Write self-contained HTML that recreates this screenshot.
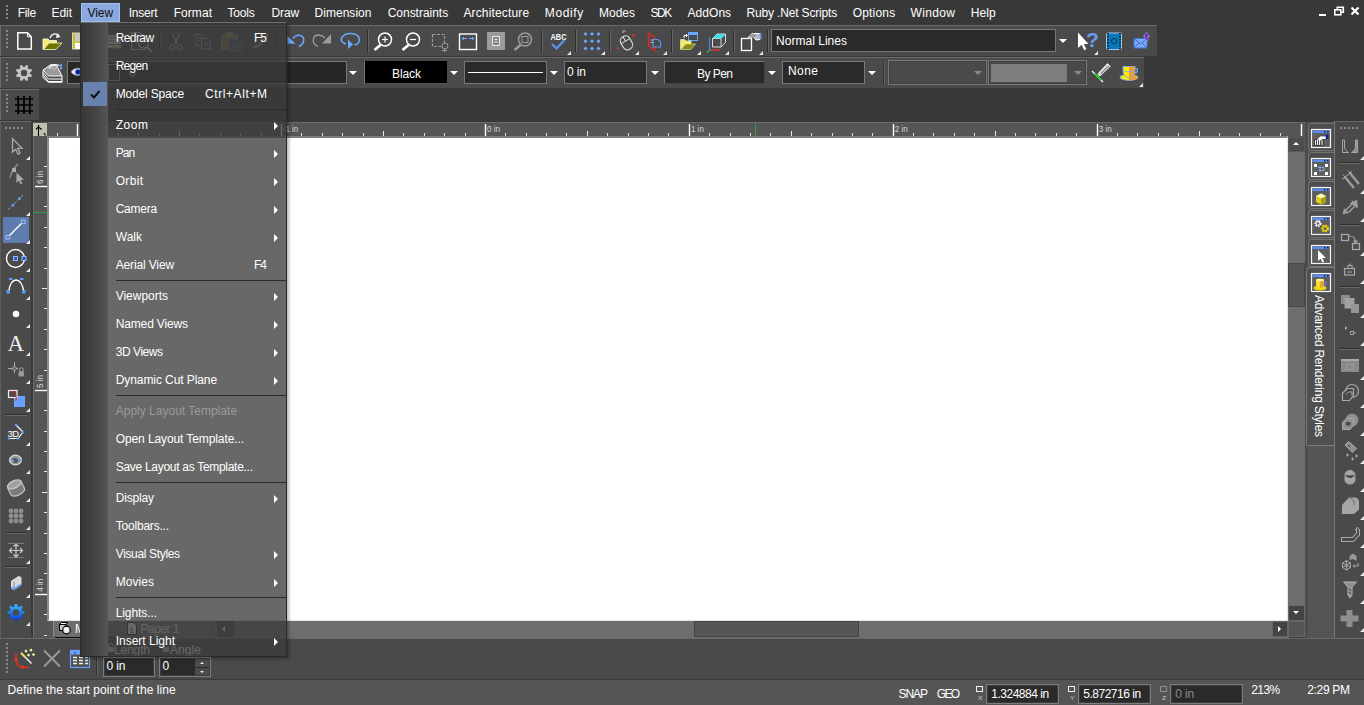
<!DOCTYPE html>
<html><head><meta charset="utf-8"><title>TurboCAD</title><style>
*{box-sizing:border-box;margin:0;padding:0}
html,body{width:1364px;height:705px;overflow:hidden;background:#383838}
body{position:relative;font-family:"Liberation Sans",sans-serif;font-size:12px;color:#fff}
.a{position:absolute}
.t{position:absolute;white-space:nowrap;line-height:16px;height:16px}
.tb{position:absolute;background:#4a4a4a;border-top:1px solid #6a6a6a;border-left:1px solid #6a6a6a}
.grip{position:absolute;width:2px;background-image:linear-gradient(#8a8a8a 50%,transparent 50%);background-size:2px 4px}
.gripH{position:absolute;height:2px;background-image:linear-gradient(90deg,#8a8a8a 50%,transparent 50%);background-size:4px 2px}
.cb{position:absolute;background:#2a2a2a;border:1px solid #787878}
.dd{position:absolute;width:0;height:0;border-left:4px solid transparent;border-right:4px solid transparent;border-top:4px solid #fff}
.sep{position:absolute;width:1px;background:#2e2e2e;border-right:1px solid #666;box-sizing:content-box}
.mi{position:absolute;left:115.700px;white-space:nowrap;line-height:16px;height:16px;color:#fff}
.sc{position:absolute;white-space:nowrap;line-height:16px;height:16px;color:#fff}
.ar{position:absolute;left:274px;width:0;height:0;border-top:4px solid transparent;border-bottom:4px solid transparent;border-left:4.500px solid #fff}
.msep{position:absolute;left:116px;width:170px;height:1px;background:#2b2b2b}
.corner{position:absolute;width:0;height:0;border-left:4px solid transparent;border-bottom:4px solid #e8e8e8}
svg{position:absolute;overflow:visible}
</style></head><body>
<div class="a" style="left:0;top:0;width:1364px;height:25px;background:#383838"></div>
<div class="grip" style="left:6px;top:5px;height:15px"></div>
<div class="a" style="left:81px;top:3px;width:39px;height:19px;background:#8aa9de;border:1px solid #a4bfee"></div>
<span class="t" style="left: 17.8px; top: 5px; color: rgb(255, 255, 255); letter-spacing: -0.35px;">File</span>
<span class="t" style="left: 51.5px; top: 5px; color: rgb(255, 255, 255); letter-spacing: -0.06px;">Edit</span>
<span class="t" style="left: 87.4px; top: 5px; color: rgb(17, 17, 17); letter-spacing: 0px;">View</span>
<span class="t" style="left: 128.7px; top: 5px; color: rgb(255, 255, 255); letter-spacing: -0.2px;">Insert</span>
<span class="t" style="left: 173.7px; top: 5px; color: rgb(255, 255, 255); letter-spacing: 0.06px;">Format</span>
<span class="t" style="left: 227.6px; top: 5px; color: rgb(255, 255, 255); letter-spacing: -0.23px;">Tools</span>
<span class="t" style="left: 271.5px; top: 5px; color: rgb(255, 255, 255); letter-spacing: -0.14px;">Draw</span>
<span class="t" style="left: 314.6px; top: 5px; color: rgb(255, 255, 255); letter-spacing: 0.02px;">Dimension</span>
<span class="t" style="left: 387.7px; top: 5px; color: rgb(255, 255, 255); letter-spacing: -0.02px;">Constraints</span>
<span class="t" style="left: 463.4px; top: 5px; color: rgb(255, 255, 255); letter-spacing: 0.15px;">Architecture</span>
<span class="t" style="left: 544.8px; top: 5px; color: rgb(255, 255, 255); letter-spacing: 0.61px;">Modify</span>
<span class="t" style="left: 598.9px; top: 5px; color: rgb(255, 255, 255); letter-spacing: 0.04px;">Modes</span>
<span class="t" style="left: 650.6px; top: 5px; color: rgb(255, 255, 255); letter-spacing: -1.54px;">SDK</span>
<span class="t" style="left: 687.5px; top: 5px; color: rgb(255, 255, 255); letter-spacing: 0.05px;">AddOns</span>
<span class="t" style="left: 746.6px; top: 5px; color: rgb(255, 255, 255); letter-spacing: -0.17px;">Ruby .Net Scripts</span>
<span class="t" style="left: 852.7px; top: 5px; color: rgb(255, 255, 255); letter-spacing: 0.19px;">Options</span>
<span class="t" style="left: 910.5px; top: 5px; color: rgb(255, 255, 255); letter-spacing: 0.34px;">Window</span>
<span class="t" style="left: 970.7px; top: 5px; color: rgb(255, 255, 255); letter-spacing: 0.07px;">Help</span>
<svg style="left:1318px;top:5px" width="40" height="14"><rect x="1" y="9" width="7" height="2" fill="#fff"></rect><rect x="16.8" y="4.800" width="6" height="5" fill="none" stroke="#fff" stroke-width="1.600"></rect><path d="M19.300 4V2.300H25.300V7.300H23.500" fill="none" stroke="#fff" stroke-width="1.600"></path><path d="M33.5 2.5l7 7M40.500 2.500l-7 7" stroke="#fff" stroke-width="2.2"></path></svg>
<div class="tb" style="left:0;top:25px;width:1157px;height:31px"></div>
<div class="tb" style="left:0;top:57px;width:1144px;height:31px"></div>
<div class="tb" style="left:0;top:89px;width:39px;height:31px"></div>
<div class="grip" style="left:6px;top:30px;height:19px"></div>
<div class="grip" style="left:6px;top:63px;height:19px"></div>
<div class="grip" style="left:6px;top:94px;height:19px"></div>
<div class="sep" style="left:159px;top:30px;height:22px"></div>
<div class="sep" style="left:277px;top:30px;height:22px"></div>
<div class="sep" style="left:367px;top:30px;height:22px"></div>
<div class="sep" style="left:541px;top:30px;height:22px"></div>
<div class="sep" style="left:575px;top:30px;height:22px"></div>
<div class="sep" style="left:609px;top:30px;height:22px"></div>
<div class="sep" style="left:671px;top:30px;height:22px"></div>
<div class="sep" style="left:733px;top:30px;height:22px"></div>
<div class="sep" style="left:767px;top:30px;height:22px"></div>
<div class="corner" style="left:567px;top:51px"></div>
<div class="corner" style="left:601px;top:51px"></div>
<div class="corner" style="left:635px;top:51px"></div>
<div class="corner" style="left:663px;top:51px"></div>
<div class="corner" style="left:697px;top:51px"></div>
<div class="corner" style="left:725px;top:51px"></div>
<div class="corner" style="left:759px;top:51px"></div>
<div class="corner" style="left:1094px;top:51px"></div>
<svg style="left:0;top:0" width="1160" height="58"><path d="M17.800 32.800H27.500L31.300 36.800V49H17.800Z" fill="#4a4a4a" stroke="#fff" stroke-width="1.500"></path><path d="M27.500 32.800V36.800H31.300" fill="none" stroke="#fff" stroke-width="1"></path><path d="M43 49.500V39h5l1.500 1.500h7V43" fill="#f4ec70" stroke="#fff" stroke-width=".8"></path><path d="M43.500 49.500L49 43h13l-6 6.500Z" fill="#6e7400" stroke="#f8f8d0" stroke-width=".8"></path><path d="M50 38c1-4 6-5.500 9-2.500" fill="none" stroke="#fff" stroke-width="1.300"></path><path d="M57 33.500l3.500 3.500l-4.500 1Z" fill="#fff"></path><rect x="72.500" y="33" width="16" height="16" fill="#c8c030" stroke="#f0f0c0" stroke-width=".8"></rect><rect x="75" y="33.500" width="11" height="8" fill="#c8c8c8"></rect><rect x="75" y="43" width="11" height="6" fill="#fff"></rect><path d="M99 41l4-6h14l4 6v7h-22Z" fill="#ddd" stroke="#888" stroke-width="1"></path><path d="M102 38h16M101 41h18M99 44.500h22" stroke="#666" stroke-width="1"></path><rect x="112" y="45.500" width="4" height="1.500" fill="#c8b800"></rect><path d="M131.500 32.500H140L145 37V49.500H131.500Z" fill="none" stroke="#ccc" stroke-width="1.200"></path><circle cx="143.500" cy="43" r="5" fill="#4a4a4a" stroke="#ccc" stroke-width="1.200"></circle><path d="M147 47l4.500 4.500" stroke="#ccc" stroke-width="2"></path><path d="M172 33l6 12M180 33l-6 12" stroke="#9a9a9a" stroke-width="1.300"></path><circle cx="172.500" cy="47.500" r="2.500" fill="none" stroke="#9a9a9a" stroke-width="1.200"></circle><circle cx="179.500" cy="47.500" r="2.500" fill="none" stroke="#9a9a9a" stroke-width="1.200"></circle><path d="M195.500 34.500h6l2.500 2.500v8.500h-8.500Z" fill="none" stroke="#9a9a9a" stroke-width="1"></path><path d="M201.500 38.500h6l3 3v7.500h-9Z" fill="#4a4a4a" stroke="#9a9a9a" stroke-width="1"></path><path d="M197.500 38h4M197.500 40.500h3M203.500 42.500h5M203.500 45h5" stroke="#9a9a9a" stroke-width=".8"></path><rect x="221.500" y="34.500" width="16" height="15" rx="1.500" fill="#7a7440" stroke="#8c8660" stroke-width="1"></rect><rect x="226" y="32.500" width="7" height="4" rx="1" fill="#8a8450" stroke="#9a9470" stroke-width=".8"></rect><path d="M229.500 39.500h9l3.500 3.500v8h-12.500Z" fill="#4a5060" stroke="#5070a8" stroke-width="1"></path><path d="M232 45h8M232 47.500h8" stroke="#5070a8" stroke-width="1"></path><path d="M252 47l8-4l2 2l-6 3.500Z" fill="#9a9a9a"></path><path d="M259 42.500l8-8.500l2 1.500l-7.500 9Z" fill="#9a9a9a"></path><path d="M293 38.500c4-6 12-3 10.500 3c-.6 2.400-2.500 4-4.500 5" fill="none" stroke="#6aa8ff" stroke-width="1.500"></path><path d="M287.500 36v7.500l8 .3Z" fill="#6aa8ff"></path><path d="M318 46.500c-7-3-5.500-11 0-11.500c2.500-.2 5 1 7 3" fill="none" stroke="#9a9a9a" stroke-width="1.300"></path><path d="M331 34v9.500h-9Z" fill="#9a9a9a"></path><path d="M346 44c-9-2-4-11 5-10.500c10 .5 11 10 3.500 11.500" fill="none" stroke="#6aa8ff" stroke-width="1.600"></path><path d="M348 39.500l5 5l-5 4.500Z" fill="#6aa8ff"></path><circle cx="385" cy="39.500" r="6.500" fill="none" stroke="#fff" stroke-width="1.500"></circle><path d="M380.5 45l-6 5" stroke="#fff" stroke-width="2.600"></path><path d="M382 39.500h6" stroke="#fff" stroke-width="1.200"></path><path d="M385 36.500v6" stroke="#fff" stroke-width="1.200"></path><circle cx="413" cy="39.500" r="6.500" fill="none" stroke="#fff" stroke-width="1.500"></circle><path d="M408.5 45l-6 5" stroke="#fff" stroke-width="2.600"></path><path d="M410 39.500h6" stroke="#fff" stroke-width="1.200"></path><rect x="432.500" y="34.500" width="12" height="12" fill="none" stroke="#9a9a9a" stroke-width="1.200" stroke-dasharray="3 1.500"></rect><circle cx="445" cy="46" r="3" fill="#4a4a4a" stroke="#9a9a9a" stroke-width="1"></circle><path d="M442 50.500h5M444.500 48v4" stroke="#9a9a9a" stroke-width="1"></path><rect x="459.500" y="34" width="17" height="15.500" fill="#4a4a4a" stroke="#fff" stroke-width="1.400"></rect><path d="M462 38.500h5M469 38.500h5" stroke="#6aa8ff" stroke-width="1.200"></path><path d="M464 36.500l-2.500 2l2.500 2ZM472 36.500l2.500 2l-2.500 2Z" fill="#6aa8ff"></path><rect x="487" y="32" width="18" height="18" fill="#9c9c9c"></rect><rect x="492.500" y="36.500" width="7" height="9" fill="#888" stroke="#e4e4e4" stroke-width="1"></rect><path d="M494.500 39.500h3M494.500 42h3" stroke="#e4e4e4" stroke-width="1"></path><circle cx="525" cy="39.500" r="6.500" fill="none" stroke="#9a9a9a" stroke-width="1.500"></circle><path d="M520.500 45l-6 5" stroke="#9a9a9a" stroke-width="2.600"></path><rect x="522" y="36.500" width="6" height="6" fill="none" stroke="#9a9a9a" stroke-width="1"></rect><text x="550.500" y="40" font-size="9.500" font-weight="bold" fill="#fff" font-family="Liberation Sans, sans-serif" textLength="16" lengthAdjust="spacingAndGlyphs">ABC</text><path d="M552 44l4.500 4.500l8-8.500" fill="none" stroke="#5b95f0" stroke-width="2.200"></path><path d="M585.5 32.0l2 2l-2 2l-2-2Z" fill="#6aa8ff"></path><path d="M585.5 39.3l2 2l-2 2l-2-2Z" fill="#6aa8ff"></path><path d="M585.5 46.6l2 2l-2 2l-2-2Z" fill="#6aa8ff"></path><path d="M592.0 32.0l2 2l-2 2l-2-2Z" fill="#6aa8ff"></path><path d="M592.0 39.3l2 2l-2 2l-2-2Z" fill="#6aa8ff"></path><path d="M592.0 46.6l2 2l-2 2l-2-2Z" fill="#6aa8ff"></path><path d="M598.5 32.0l2 2l-2 2l-2-2Z" fill="#6aa8ff"></path><path d="M598.5 39.3l2 2l-2 2l-2-2Z" fill="#6aa8ff"></path><path d="M598.5 46.6l2 2l-2 2l-2-2Z" fill="#6aa8ff"></path><g transform="rotate(-30 626 42)"><rect x="621" y="36" width="10" height="14" rx="4.500" fill="none" stroke="#ddd" stroke-width="1.200"></rect><path d="M621 41h10M626 36v5" stroke="#ddd" stroke-width="1"></path></g><path d="M623 33c-1-2 1-3 2.500-1.500" fill="none" stroke="#ddd" stroke-width="1"></path><path d="M632 34l1.500 2.500l1.500-2.500" fill="none" stroke="#e03030" stroke-width="1.200"></path><path d="M617 47.500l2 2M619 47.500l-2 2" stroke="#e03030" stroke-width="1"></path><path d="M648.500 33l6 4.500v13l-6-5Z" fill="none" stroke="#e02828" stroke-width="1.500"></path><path d="M653 39.500h5l2.500 2.500v5h-7.500Z" fill="#4a4a4a" stroke="#5b95f0" stroke-width="1.200"></path><path d="M650.500 40h3M650.500 42.500h3" stroke="#aaa" stroke-width="1"></path><rect x="688.500" y="32.500" width="9" height="8" fill="#4a4a4a" stroke="#6aa8ff" stroke-width="1"></rect><rect x="688.500" y="32.500" width="9" height="2.500" fill="#6aa8ff"></rect><path d="M680.500 49.500V39.500h4l1.500 1.500h5V44" fill="#f4ec70" stroke="#f8f8d0" stroke-width=".6"></path><path d="M681 49.500L685.500 44h10l-4.500 5.500Z" fill="#8a8c20" stroke="#e8e890" stroke-width=".6"></path><path d="M684 38v-2.500h3M686 34l1.500 1.500L686 37" fill="none" stroke="#fff" stroke-width="1"></path><path d="M712.500 38.500l4.500-4.500h8.500v8.500l-4.500 4.500h-8.500ZM712.500 38.500h8.500v8.500M721 38.500l4.500-4.500" fill="none" stroke="#ddd" stroke-width="1"></path><path d="M712.500 38.500l4.500-4.500h8.500l-4.500 4.500Z" fill="#40e0f0"></path><path d="M709.500 37v13h9" fill="none" stroke="#4090f0" stroke-width="1"></path><path d="M711 50h9" stroke="#e02828" stroke-width="1.500"></path><path d="M709.500 50l-2.500 2.500" stroke="#30c040" stroke-width="1.200"></path><rect x="741.500" y="38.500" width="10" height="12" fill="#4a4a4a" stroke="#fff" stroke-width="1.300"></rect><path d="M747 39l5-5.500h8v6l-4 .5l-2-2.500" fill="#bbb" stroke="#fff" stroke-width="1"></path><path d="M750 36.500l4-3M752 37.500l4-3" stroke="#555" stroke-width=".8"></path><rect x="759.500" y="33" width="2" height="6" fill="#5b95f0"></rect><path d="M1078 32.500v15.500l3.600-3.200l2.600 5.500l2.200-1l-2.600-5.400h4.800Z" fill="#fff"></path><text x="1086" y="47" font-size="21" font-weight="bold" fill="#6a9cf0" font-family="Liberation Sans, sans-serif">?</text><rect x="1106.500" y="33" width="15" height="16.500" rx="1" fill="#0878b8" stroke="#9cc8e8" stroke-width="1"></rect><path d="M1108 33v16.500M1120 33v16.500" stroke="#111" stroke-width="1.500" stroke-dasharray="1.500 1.500"></path><circle cx="1114" cy="41" r="2.600" fill="none" stroke="#034" stroke-width=".9"></circle><path d="M1134 38.500h13v9.500h-13Z" fill="#78aaf8" stroke="#3c78e0" stroke-width="1"></path><path d="M1134 38.500l6.500 5.500l6.500-5.500M1134 48l5-5M1147 48l-5-5" fill="none" stroke="#2c58c0" stroke-width=".8"></path><path d="M1146.500 32.500l3 4h-1.700v4h-2.600v-4h-1.700Z" fill="#7020d0" stroke="#c8c8ff" stroke-width=".5"></path></svg>
<div class="cb" style="left:771px;top:29px;width:285px;height:23px"></div>
<span class="t" style="left: 776px; top: 33px; letter-spacing: 0.03px;">Normal Lines</span>
<div class="dd" style="left:1059px;top:39px"></div>
<svg style="left:0;top:0" width="1160" height="90"><polygon points="32.04,75.08 31.15,77.22 28.73,76.69 27.69,77.73 28.22,80.15 26.08,81.04 24.73,78.95 23.27,78.96 21.92,81.04 19.78,80.15 20.31,77.73 19.27,76.69 16.85,77.22 15.96,75.08 18.05,73.73 18.04,72.27 15.96,70.92 16.85,68.78 19.27,69.31 20.31,68.27 19.78,65.85 21.92,64.96 23.27,67.05 24.73,67.04 26.08,64.96 28.22,65.85 27.69,68.27 28.73,69.31 31.15,68.78 32.04,70.92 29.95,72.27 29.96,73.73" fill="#c4c4c4"></polygon><circle cx="24" cy="73" r="3.200" fill="#4a4a4a"></circle><path d="M43 72.500l5.500 6.500h13.500M43 75l5.500 6.500h13.500M43 77.500l5.500 4.800h13.500M62 76v6.300M43 70.500v7" fill="none" stroke="#fff" stroke-width="1"></path><path d="M43 70l8-5.500l6 1.500l5 10h-13.500Z" fill="#9a9a9a" stroke="#fff" stroke-width="1"></path><path d="M49 68.500c2-4 6.500-4.500 10.500-3" fill="none" stroke="#fff" stroke-width="1.200"></path><path d="M51 69l3-2M53.500 70l3-2" stroke="#ddd" stroke-width=".7"></path><rect x="60" y="64" width="2" height="5.500" fill="#5b95f0"></rect></svg>
<div class="cb" style="left:67px;top:61px;width:280px;height:23px;background:#272727"></div>
<svg style="left:70px;top:65px" width="16" height="14"><path d="M1 7c3-5 10-5 13 0c-3 4.500-10 4.500-13 0Z" fill="#e8e8e8" stroke="#999" stroke-width=".8"></path><circle cx="8" cy="7" r="2.800" fill="#1040c0"></circle><circle cx="8" cy="7" r="1.200" fill="#001040"></circle></svg>
<div class="a" style="left:108px;top:64px;width:12px;height:17px;background:#2a2a2a;border:1px solid #a0a0a0"></div>
<span class="t" style="left:129px;top:65px;color:#ddd">0</span>
<div class="dd" style="left:349px;top:71px"></div>
<div class="a" style="left:364px;top:61px;width:83px;height:23px;background:#000;border-left:1px solid #787878;border-bottom:1px solid #555"></div>
<span class="t" style="left: 392px; top: 66px; letter-spacing: -0.09px;">Black</span>
<div class="dd" style="left:450px;top:71px"></div>
<div class="cb" style="left:464px;top:61px;width:83px;height:23px"></div>
<div class="a" style="left:468px;top:72px;width:75px;height:1px;background:#fff"></div>
<div class="dd" style="left:550px;top:71px"></div>
<div class="cb" style="left:564px;top:61px;width:83px;height:23px"></div>
<span class="t" style="left: 567px; top: 64px; letter-spacing: -0.12px;">0 in</span>
<div class="dd" style="left:651px;top:71px"></div>
<div class="a" style="left:664px;top:61px;width:101px;height:23px;background:#2a2a2a;border:1px solid #787878;border-right-color:#444;border-bottom-color:#444"></div>
<span class="t" style="left: 697px; top: 66px; letter-spacing: -0.54px;">By Pen</span>
<div class="dd" style="left:768px;top:71px"></div>
<div class="cb" style="left:782px;top:61px;width:83px;height:23px"></div>
<span class="t" style="left: 788px; top: 63px; letter-spacing: 0.44px;">None</span>
<div class="dd" style="left:868px;top:71px"></div>
<div class="sep" style="left:883px;top:62px;height:22px"></div>
<div class="a" style="left:888px;top:60px;width:99px;height:25px;background:#4a4a4a;border:1px solid #787878;box-shadow:inset 0 0 0 1px #404040"></div>
<div class="dd" style="left:974px;top:71px;border-top-color:#8a8a8a"></div>
<div class="a" style="left:988px;top:60px;width:99px;height:25px;background:#4a4a4a;border:1px solid #787878;box-shadow:inset 0 0 0 1px #404040"></div>
<div class="a" style="left:991px;top:64px;width:76px;height:18px;background:#7d7d7d"></div>
<div class="dd" style="left:1074px;top:71px;border-top-color:#8a8a8a"></div>
<svg style="left:0;top:0" width="1160" height="90"><path d="M1092 71l11 11" stroke="#fff" stroke-width="1.200"></path><path d="M1094.500 73.500l6.500 6.500" stroke="#00e000" stroke-width="1.400"></path><path d="M1098.500 73l9-9.500l2.800 2.800l-9.500 9c-1.200 1-3.800 0-2.300-2.300Z" fill="#e4e4e4" stroke="#fff" stroke-width=".6"></path><path d="M1101 73.500l7.500-7.500" stroke="#333" stroke-width="1.300" stroke-dasharray=".8 .8"></path><ellipse cx="1129" cy="77.300" rx="9" ry="3" fill="#ffee00" stroke="#78a8f8" stroke-width="1"></ellipse><path d="M1129 74.300a9 3 0 0 1 0 6Z" fill="#e8a038"></path><path d="M1123 66.500h12v4c0 4-2.500 7-6 7s-6-3-6-7Z" fill="#ffee00" stroke="#78a8f8" stroke-width="1"></path><path d="M1129 66.500h6v4c0 4-2.500 7-6 7Z" fill="#e8a038"></path><path d="M1135 68.500c3.500-.5 3.500 4-.5 4.500" fill="none" stroke="#78a8f8" stroke-width="1.200"></path><path d="M1123 70.500c3 1.500 9 1.500 12 0" fill="none" stroke="#78a8f8" stroke-width=".8"></path></svg>
<div class="corner" style="left:1139px;top:83px"></div>
<svg style="left:0;top:0" width="40" height="121"><path d="M18.200 96v18M24 96v18M29.800 96v18M15 99h18M15 105h18M15 111h18" stroke="#000" stroke-width="1.700"></path></svg>
<div class="a" style="left:33px;top:122px;width:1273px;height:15px;background:#555;border-top:1px solid #6c6c6c"></div>
<div class="a" style="left:33px;top:122px;width:15px;height:516px;background:#555;border-left:1px solid #6c6c6c"></div>
<div class="a" style="left:33px;top:123px;width:14px;height:13px;background:#c0c0b0"></div>
<svg style="left:33px;top:123px" width="14" height="13"><path d="M5.500 2V13" stroke="#000" stroke-width="1.100"></path><path d="M3.200 6.200L5.500 3.800L7.800 6.200" fill="none" stroke="#000" stroke-width="1.100"></path><rect x="7" y="5" width="1.700" height="1.500" fill="#000"></rect><rect x="3" y="5" width="1" height="1.500" fill="#000"></rect><path d="M11 10l1.500 2.500" stroke="#000" stroke-width="1.200"></path></svg>
<div class="a" style="left:47px;top:136px;width:1241px;height:485px;background:#fff;border-left:2px solid #8c8c8c;border-top:2px solid #7c7c7c;border-right:1px solid #e4e4e4;border-bottom:1px solid #e4e4e4"></div>
<svg style="left:0;top:122px" width="1310" height="15"><path d="M57.5 11V14" stroke="#e0e0e0" stroke-width="1"></path><path d="M77.5 2V14" stroke="#fff" stroke-width="1.4"></path><path d="M97.5 11V14" stroke="#e0e0e0" stroke-width="1"></path><path d="M118.5 11V14" stroke="#e0e0e0" stroke-width="1"></path><path d="M138.5 11V14" stroke="#e0e0e0" stroke-width="1"></path><path d="M159.5 11V14" stroke="#e0e0e0" stroke-width="1"></path><path d="M179.5 9V14" stroke="#e8e8e8" stroke-width="1"></path><path d="M199.5 11V14" stroke="#e0e0e0" stroke-width="1"></path><path d="M220.5 11V14" stroke="#e0e0e0" stroke-width="1"></path><path d="M240.5 11V14" stroke="#e0e0e0" stroke-width="1"></path><path d="M261.5 11V14" stroke="#e0e0e0" stroke-width="1"></path><path d="M281.5 2V14" stroke="#fff" stroke-width="1.4"></path><path d="M301.5 11V14" stroke="#e0e0e0" stroke-width="1"></path><path d="M322.5 11V14" stroke="#e0e0e0" stroke-width="1"></path><path d="M342.5 11V14" stroke="#e0e0e0" stroke-width="1"></path><path d="M363.5 11V14" stroke="#e0e0e0" stroke-width="1"></path><path d="M383.5 9V14" stroke="#e8e8e8" stroke-width="1"></path><path d="M403.5 11V14" stroke="#e0e0e0" stroke-width="1"></path><path d="M424.5 11V14" stroke="#e0e0e0" stroke-width="1"></path><path d="M444.5 11V14" stroke="#e0e0e0" stroke-width="1"></path><path d="M465.5 11V14" stroke="#e0e0e0" stroke-width="1"></path><path d="M485.5 2V14" stroke="#fff" stroke-width="1.4"></path><path d="M505.5 11V14" stroke="#e0e0e0" stroke-width="1"></path><path d="M526.5 11V14" stroke="#e0e0e0" stroke-width="1"></path><path d="M546.5 11V14" stroke="#e0e0e0" stroke-width="1"></path><path d="M566.5 11V14" stroke="#e0e0e0" stroke-width="1"></path><path d="M587.5 9V14" stroke="#e8e8e8" stroke-width="1"></path><path d="M607.5 11V14" stroke="#e0e0e0" stroke-width="1"></path><path d="M628.5 11V14" stroke="#e0e0e0" stroke-width="1"></path><path d="M648.5 11V14" stroke="#e0e0e0" stroke-width="1"></path><path d="M668.5 11V14" stroke="#e0e0e0" stroke-width="1"></path><path d="M689.5 2V14" stroke="#fff" stroke-width="1.4"></path><path d="M709.5 11V14" stroke="#e0e0e0" stroke-width="1"></path><path d="M730.5 11V14" stroke="#e0e0e0" stroke-width="1"></path><path d="M750.5 11V14" stroke="#e0e0e0" stroke-width="1"></path><path d="M770.5 11V14" stroke="#e0e0e0" stroke-width="1"></path><path d="M791.5 9V14" stroke="#e8e8e8" stroke-width="1"></path><path d="M811.5 11V14" stroke="#e0e0e0" stroke-width="1"></path><path d="M832.5 11V14" stroke="#e0e0e0" stroke-width="1"></path><path d="M852.5 11V14" stroke="#e0e0e0" stroke-width="1"></path><path d="M872.5 11V14" stroke="#e0e0e0" stroke-width="1"></path><path d="M893.5 2V14" stroke="#fff" stroke-width="1.4"></path><path d="M913.5 11V14" stroke="#e0e0e0" stroke-width="1"></path><path d="M933.5 11V14" stroke="#e0e0e0" stroke-width="1"></path><path d="M954.5 11V14" stroke="#e0e0e0" stroke-width="1"></path><path d="M974.5 11V14" stroke="#e0e0e0" stroke-width="1"></path><path d="M995.5 9V14" stroke="#e8e8e8" stroke-width="1"></path><path d="M1015.5 11V14" stroke="#e0e0e0" stroke-width="1"></path><path d="M1035.5 11V14" stroke="#e0e0e0" stroke-width="1"></path><path d="M1056.5 11V14" stroke="#e0e0e0" stroke-width="1"></path><path d="M1076.5 11V14" stroke="#e0e0e0" stroke-width="1"></path><path d="M1097.5 2V14" stroke="#fff" stroke-width="1.4"></path><path d="M1117.5 11V14" stroke="#e0e0e0" stroke-width="1"></path><path d="M1137.5 11V14" stroke="#e0e0e0" stroke-width="1"></path><path d="M1158.5 11V14" stroke="#e0e0e0" stroke-width="1"></path><path d="M1178.5 11V14" stroke="#e0e0e0" stroke-width="1"></path><path d="M1199.5 9V14" stroke="#e8e8e8" stroke-width="1"></path><path d="M1219.5 11V14" stroke="#e0e0e0" stroke-width="1"></path><path d="M1239.5 11V14" stroke="#e0e0e0" stroke-width="1"></path><path d="M1260.5 11V14" stroke="#e0e0e0" stroke-width="1"></path><path d="M1280.5 11V14" stroke="#e0e0e0" stroke-width="1"></path><path d="M1301.5 2V14" stroke="#fff" stroke-width="1.4"></path><text x="283.1" y="10" font-size="8.500" fill="#d8d8d8" textLength="15" lengthAdjust="spacingAndGlyphs" font-family="Liberation Sans, sans-serif">-1 in</text><text x="487.0" y="10" font-size="8.500" fill="#d8d8d8" textLength="13" lengthAdjust="spacingAndGlyphs" font-family="Liberation Sans, sans-serif">0 in</text><text x="690.9" y="10" font-size="8.500" fill="#d8d8d8" textLength="13" lengthAdjust="spacingAndGlyphs" font-family="Liberation Sans, sans-serif">1 in</text><text x="894.8" y="10" font-size="8.500" fill="#d8d8d8" textLength="13" lengthAdjust="spacingAndGlyphs" font-family="Liberation Sans, sans-serif">2 in</text><text x="1098.7" y="10" font-size="8.500" fill="#d8d8d8" textLength="13" lengthAdjust="spacingAndGlyphs" font-family="Liberation Sans, sans-serif">3 in</text><path d="M755.5 1V14" stroke="#2ea043" stroke-width="1"></path></svg>
<svg style="left:33px;top:137px" width="15" height="500"><path d="M11 29.5H14" stroke="#e0e0e0" stroke-width="1"></path><path d="M2 49.5H14" stroke="#fff" stroke-width="1.4"></path><path d="M11 69.5H14" stroke="#e0e0e0" stroke-width="1"></path><path d="M11 90.5H14" stroke="#e0e0e0" stroke-width="1"></path><path d="M11 110.5H14" stroke="#e0e0e0" stroke-width="1"></path><path d="M11 131.5H14" stroke="#e0e0e0" stroke-width="1"></path><path d="M9 151.5H14" stroke="#e8e8e8" stroke-width="1"></path><path d="M11 171.5H14" stroke="#e0e0e0" stroke-width="1"></path><path d="M11 192.5H14" stroke="#e0e0e0" stroke-width="1"></path><path d="M11 212.5H14" stroke="#e0e0e0" stroke-width="1"></path><path d="M11 233.5H14" stroke="#e0e0e0" stroke-width="1"></path><path d="M2 253.5H14" stroke="#fff" stroke-width="1.4"></path><path d="M11 273.5H14" stroke="#e0e0e0" stroke-width="1"></path><path d="M11 294.5H14" stroke="#e0e0e0" stroke-width="1"></path><path d="M11 314.5H14" stroke="#e0e0e0" stroke-width="1"></path><path d="M11 334.5H14" stroke="#e0e0e0" stroke-width="1"></path><path d="M9 355.5H14" stroke="#e8e8e8" stroke-width="1"></path><path d="M11 375.5H14" stroke="#e0e0e0" stroke-width="1"></path><path d="M11 396.5H14" stroke="#e0e0e0" stroke-width="1"></path><path d="M11 416.5H14" stroke="#e0e0e0" stroke-width="1"></path><path d="M11 436.5H14" stroke="#e0e0e0" stroke-width="1"></path><path d="M2 457.5H14" stroke="#fff" stroke-width="1.4"></path><path d="M11 477.5H14" stroke="#e0e0e0" stroke-width="1"></path><path d="M11 498.5H14" stroke="#e0e0e0" stroke-width="1"></path><text transform="translate(9.500,47.0) rotate(-90)" font-size="8.500" fill="#d8d8d8" textLength="13" lengthAdjust="spacingAndGlyphs" font-family="Liberation Sans, sans-serif">6 in</text><text transform="translate(9.500,250.9) rotate(-90)" font-size="8.500" fill="#d8d8d8" textLength="13" lengthAdjust="spacingAndGlyphs" font-family="Liberation Sans, sans-serif">5 in</text><text transform="translate(9.500,454.8) rotate(-90)" font-size="8.500" fill="#d8d8d8" textLength="13" lengthAdjust="spacingAndGlyphs" font-family="Liberation Sans, sans-serif">4 in</text><path d="M1 75.500H15" stroke="#2ea043" stroke-width="1"></path></svg>
<div class="a" style="left:1288px;top:137px;width:17px;height:484px;background:#6e6e6e"></div>
<div class="a" style="left:1288px;top:137px;width:17px;height:15px;background:#4c4c4c;border:1px solid #585858"></div>
<div class="a" style="left:1293px;top:142px;width:0;height:0;border-left:3.500px solid transparent;border-right:3.500px solid transparent;border-bottom:3.500px solid #fff"></div>
<div class="a" style="left:1288px;top:263px;width:17px;height:44px;background:#565656;border:1px solid #474747"></div>
<div class="a" style="left:1288px;top:605px;width:17px;height:16px;background:#444;border:1px solid #6a6a6a"></div>
<div class="a" style="left:1293px;top:611px;width:0;height:0;border-left:3.500px solid transparent;border-right:3.500px solid transparent;border-top:3.500px solid #fff"></div>
<div class="a" style="left:48px;top:621px;width:1241px;height:17px;background:#6e6e6e"></div>
<div class="a" style="left:1288px;top:621px;width:17px;height:16px;background:#555;border:1px solid #666"></div>
<div class="a" style="left:48px;top:621px;width:5px;height:17px;background:#575757"></div>
<div class="a" style="left:53px;top:621px;width:62px;height:17px;background:#6e6e6e;border-left:1px solid #8c8c8c;border-bottom:1px solid #0c0c0c;border-radius:0 0 0 4px"></div>
<div class="a" style="left:115px;top:621px;width:98px;height:16px;background:#707070;border-right:1px solid #555"></div>
<div class="a" style="left:118px;top:621px;width:70px;height:15px;background:#747474;border:1px solid #666;border-top:none;border-radius:0 0 3px 3px"></div>
<svg style="left:58px;top:621px" width="16" height="15"><path d="M1.500 3.500L3.500 1.500H9.500L8 3.500Z" fill="#fff" stroke="#000" stroke-width="1"></path><rect x="1.500" y="3.500" width="6.500" height="6" fill="#c8c8c8" stroke="#000" stroke-width="1"></rect><circle cx="8.500" cy="9" r="3.800" fill="#e8e8e8" stroke="#000" stroke-width="1.200"></circle><circle cx="7.800" cy="8.200" r="1.500" fill="#fff"></circle></svg>
<span class="t" style="left:75px;top:621px;color:#fff">Model</span>
<svg style="left:126px;top:622px" width="12" height="14"><path d="M1.500 .5H7.500L10.500 3.500V12.500H1.500Z" fill="#f4f4f4" stroke="#222"></path><text x="3.500" y="11" font-size="8" fill="#224" font-family="Liberation Sans, sans-serif">1</text></svg>
<span class="t" style="left: 140.5px; top: 621px; color: rgb(232, 232, 232); letter-spacing: -0.51px;">Paper 1</span>
<div class="a" style="left:217px;top:621px;width:17px;height:16px;background:#4c4c4c"></div>
<div class="a" style="left:222px;top:625.500px;width:0;height:0;border-top:3.500px solid transparent;border-bottom:3.500px solid transparent;border-right:3.500px solid #fff"></div>
<div class="a" style="left:694px;top:621px;width:165px;height:16px;background:#565656;border:1px solid #454545"></div>
<div class="a" style="left:1272px;top:621px;width:16px;height:16px;background:#444;border:1px solid #666"></div>
<div class="a" style="left:1278px;top:625.500px;width:0;height:0;border-top:3.500px solid transparent;border-bottom:3.500px solid transparent;border-left:3.500px solid #fff"></div>
<div class="a" style="left:0;top:638px;width:1364px;height:42px;background:#4a4a4a;border-top:1px solid #686868"></div>
<div class="a" style="left:0;top:679px;width:1364px;height:26px;background:#555;border-top:1px solid #3a3a3a"></div>
<div class="grip" style="left:6px;top:643px;height:31px"></div>
<span class="t" style="left: 7.6px; top: 682px; letter-spacing: 0.06px;">Define the start point of the line</span>
<svg style="left:0;top:640px" width="100" height="40"><path d="M16 14v5c0 5 3 8.500 8 8.500h5" fill="none" stroke="#e83020" stroke-width="1.600"></path><circle cx="16" cy="20" r="1.800" fill="#e83020"></circle><circle cx="22.500" cy="27" r="1.800" fill="#e83020"></circle><path d="M21 13l10.500 10.500" stroke="#e8e8e8" stroke-width="1.600"></path><path d="M21 13l4 4" stroke="#f0e040" stroke-width="1.800"></path><path d="M26 9.500l1.600 1.600L26 12.700L24.400 11.100ZM31 8.500l1.600 1.600L31 11.700L29.400 10.100ZM28.500 13.500l1.600 1.600l-1.600 1.600l-1.600-1.600ZM33.500 13l1.600 1.600l-1.600 1.600l-1.600-1.600Z" fill="#f8f8b0"></path><path d="M44 10.500l16 16M60 10.500l-16 16" stroke="#9a9a9a" stroke-width="2"></path><rect x="70.500" y="10.500" width="19" height="17" fill="#505050" stroke="#6aa0ff" stroke-width="1.200"></rect><rect x="71" y="11" width="18" height="3.500" fill="#6aa0ff"></rect><path d="M75 12v1.500M84 12v1.500" stroke="#123" stroke-width="1"></path><path d="M73 17.500h4M79 17.500h4M85 17.500h3M73 20.500h4M79 20.500h4M85 20.500h3M73 23.500h4M79 23.500h4M85 23.500h3" stroke="#eee" stroke-width="1.500"></path></svg>
<div class="sep" style="left:96px;top:654px;height:22px"></div>
<svg style="left:107px;top:642px" width="8" height="12"><rect x="1" y="5" width="6" height="5" rx="1" fill="#c0c0c0"></rect><path d="M2 5V3.500a2 2 0 0 1 4 0" fill="none" stroke="#c0c0c0" stroke-width="1.200"></path></svg>
<svg style="left:162px;top:642px" width="8" height="12"><rect x="1" y="5" width="6" height="5" rx="1" fill="#c0c0c0"></rect><path d="M2 5V3.500a2 2 0 0 1 4 0" fill="none" stroke="#c0c0c0" stroke-width="1.200"></path></svg>
<span class="t" style="left: 114px; top: 642px; color: rgb(240, 240, 240); letter-spacing: -0.14px;">Length</span>
<span class="t" style="left: 170px; top: 642px; color: rgb(240, 240, 240); letter-spacing: 0.07px;">Angle</span>
<div class="a" style="left:103px;top:657px;width:52px;height:20px;background:#2a2a2a;border:1px solid #7c7c7c;box-shadow:inset 0 0 0 1px #3c3c3c"></div>
<span class="t" style="left: 106.5px; top: 658px; letter-spacing: -0.12px;">0 in</span>
<div class="a" style="left:159px;top:657px;width:52px;height:20px;background:#2a2a2a;border:1px solid #7c7c7c;box-shadow:inset 0 0 0 1px #3c3c3c"></div>
<span class="t" style="left:162.500px;top:658px">0</span>
<div class="a" style="left:195px;top:659px;width:14px;height:8px;background:#4c4c4c"></div>
<div class="a" style="left:195px;top:668px;width:14px;height:7px;background:#4c4c4c"></div>
<div class="a" style="left:199.500px;top:661.500px;width:0;height:0;border-left:2.500px solid transparent;border-right:2.500px solid transparent;border-bottom:2.500px solid #eee"></div>
<div class="a" style="left:199.500px;top:670.500px;width:0;height:0;border-left:2.500px solid transparent;border-right:2.500px solid transparent;border-top:2.500px solid #eee"></div>
<span class="t" style="left: 898.5px; top: 686px; letter-spacing: -1.03px;">SNAP</span>
<span class="t" style="left: 936.8px; top: 686px; letter-spacing: -1.64px;">GEO</span>
<div class="a" style="left:986px;top:684px;width:73px;height:20px;background:#2a2a2a;border:1px solid #7c7c7c;box-shadow:inset 0 0 0 1px #3c3c3c"></div>
<span class="t" style="left: 991.2px; top: 686px; color: rgb(255, 255, 255); letter-spacing: -0.47px;">1.324884 in</span>
<div class="a" style="left:976px;top:686px;width:7px;height:6px;border:1px solid #f0f0f0"></div>
<span class="t" style="left:977.5px;top:690px;font-size:8.500px;color:#c8c8c8;text-transform:uppercase;transform:scale(.8,.62);transform-origin:0 60%">x</span>
<div class="a" style="left:1078px;top:684px;width:73px;height:20px;background:#2a2a2a;border:1px solid #7c7c7c;box-shadow:inset 0 0 0 1px #3c3c3c"></div>
<span class="t" style="left: 1083.2px; top: 686px; color: rgb(255, 255, 255); letter-spacing: -0.47px;">5.872716 in</span>
<div class="a" style="left:1068px;top:686px;width:7px;height:6px;border:1px solid #f0f0f0"></div>
<span class="t" style="left:1069.5px;top:690px;font-size:8.500px;color:#c8c8c8;text-transform:uppercase;transform:scale(.8,.62);transform-origin:0 60%">y</span>
<div class="a" style="left:1170px;top:684px;width:73px;height:20px;background:#2a2a2a;border:1px solid #7c7c7c;box-shadow:inset 0 0 0 1px #3c3c3c"></div>
<span class="t" style="left: 1175.2px; top: 686px; color: rgb(140, 140, 140); letter-spacing: -0.12px;">0 in</span>
<div class="a" style="left:1160px;top:686px;width:7px;height:6px;border:1px solid #8c8c8c"></div>
<span class="t" style="left:1161.5px;top:690px;font-size:8.500px;color:#c8c8c8;text-transform:uppercase;transform:scale(.8,.62);transform-origin:0 60%">z</span>
<span class="t" style="left: 1251.2px; top: 682px; letter-spacing: -0.57px;">213%</span>
<span class="t" style="left: 1307.2px; top: 682px; letter-spacing: -0.33px;">2:29 PM</span>
<div class="a" style="left:0;top:121px;width:32px;height:517px;background:#4a4a4a;border-top:1px solid #676767;border-left:1px solid #5c5c5c;border-right:1px solid #3a3a3a"></div>
<div class="gripH" style="left:5px;top:127px;width:19px"></div>
<div class="a" style="left:3px;top:217px;width:26px;height:26px;background:#5f7cae"></div>
<div class="corner" style="left:26px;top:156px"></div>
<div class="corner" style="left:26px;top:212px"></div>
<div class="corner" style="left:26px;top:240px"></div>
<div class="corner" style="left:26px;top:268px"></div>
<div class="corner" style="left:26px;top:296px"></div>
<div class="corner" style="left:26px;top:324px"></div>
<div class="corner" style="left:26px;top:352px"></div>
<div class="corner" style="left:26px;top:380px"></div>
<div class="corner" style="left:26px;top:408px"></div>
<div class="corner" style="left:26px;top:442px"></div>
<div class="corner" style="left:26px;top:470px"></div>
<div class="corner" style="left:26px;top:498px"></div>
<div class="corner" style="left:26px;top:526px"></div>
<div class="corner" style="left:26px;top:560px"></div>
<div class="corner" style="left:26px;top:594px"></div>
<div class="corner" style="left:26px;top:622px"></div>
<div class="a" style="left:6px;top:414px;width:21px;height:1px;background:#2e2e2e;border-bottom:1px solid #6a6a6a;box-sizing:content-box"></div>
<div class="a" style="left:6px;top:532px;width:21px;height:1px;background:#2e2e2e;border-bottom:1px solid #6a6a6a;box-sizing:content-box"></div>
<div class="a" style="left:6px;top:566px;width:21px;height:1px;background:#2e2e2e;border-bottom:1px solid #6a6a6a;box-sizing:content-box"></div>
<svg style="left:0;top:0" width="33" height="640"><path d="M12.500 138.500V152l3.200-2.800l2.300 5l2-1l-2.300-4.800h4.300Z" fill="none" stroke="#aaa" stroke-width="1.3"></path><path d="M10 178c1-6 4-10 8-14" fill="none" stroke="#999" stroke-width="1.2"></path><rect x="12" y="168" width="4" height="4" fill="#aaa"></rect><path d="M16.500 172.500V183l2.500-2.200l1.800 3.700l1.600-.8l-1.800-3.600h3.400Z" fill="#aaa"></path><path d="M8 210L24 194" stroke="#999" stroke-width="1" stroke-dasharray="3 1.500"></path><circle cx="13" cy="205" r="1.500" fill="#5b9bff"></circle><circle cx="19.500" cy="198.500" r="1.500" fill="#5b9bff"></circle><path d="M8 237L23 222" stroke="#fff" stroke-width="1.500"></path><rect x="6" y="235.500" width="3.500" height="3.500" fill="#5f7cae" stroke="#9cc0ff" stroke-width="1"></rect><rect x="21.500" y="220" width="3.500" height="3.500" fill="#5f7cae" stroke="#9cc0ff" stroke-width="1"></rect><circle cx="15.500" cy="258.500" r="9" fill="none" stroke="#fff" stroke-width="1.400"></circle><rect x="13.500" y="256.500" width="4" height="4" fill="#2a5fc0" stroke="#8fb8ff"></rect><rect x="22" y="256.500" width="4" height="4" fill="#2a5fc0" stroke="#8fb8ff"></rect><path d="M8.500 292C11 276 21 276 24 292" fill="none" stroke="#fff" stroke-width="1.400"></path><rect x="6.500" y="290" width="3.500" height="3.500" fill="#5b9bff"></rect><rect x="22" y="290" width="3.500" height="3.500" fill="#5b9bff"></rect><rect x="9" y="278" width="3.500" height="2" fill="#5b9bff"></rect><rect x="20" y="278" width="3.500" height="2" fill="#5b9bff"></rect><circle cx="16" cy="314" r="3.300" fill="#fff"></circle><text x="7.500" y="351" font-size="23" fill="#eee" font-family="Liberation Serif, serif">A</text><path d="M8 368.500H18M14.500 362V373" stroke="#aaa" stroke-width="1"></path><rect x="13" y="367" width="3" height="3" fill="#4a4a4a" stroke="#aaa" stroke-width=".8"></rect><rect x="18.500" y="371" width="5.500" height="5.500" rx="1.500" fill="#999"></rect><path d="M19.500 371v-1.500a1.800 1.800 0 0 1 3.600 0V371" fill="none" stroke="#999" stroke-width="1.100"></path><rect x="14" y="396" width="11" height="11" fill="#6aa0ff"></rect><rect x="8.500" y="390.500" width="8.500" height="7" fill="#4a4a4a" stroke="#f0f0f0" stroke-width="1.200"></rect><path d="M10 391.500c4 0 7 2 6 9" fill="none" stroke="#e02020" stroke-width="1"></path><text x="7.500" y="436.500" font-size="9.500" fill="#fff" font-family="Liberation Sans, sans-serif" letter-spacing="-.5">3D</text><path d="M16 425l7 7l-5 6.500h-9" fill="none" stroke="#fff" stroke-width="1.200"></path><circle cx="16" cy="425" r="1.300" fill="#5b9bff"></circle><circle cx="23" cy="432" r="1.300" fill="#5b9bff"></circle><circle cx="18" cy="438.500" r="1.300" fill="#5b9bff"></circle><circle cx="9" cy="438.500" r="1.300" fill="#5b9bff"></circle><ellipse cx="15.500" cy="460" rx="6" ry="4.800" fill="#999" stroke="#ddd" stroke-width="1.200"></ellipse><ellipse cx="15" cy="460.500" rx="3" ry="2.500" fill="#555"></ellipse><circle cx="13" cy="461" r="1.200" fill="#5b9bff"></circle><circle cx="20.500" cy="460.500" r="1.200" fill="#5b9bff"></circle><g transform="rotate(-25 16 488)"><path d="M8.500 484v8a7.500 3.500 0 0 0 15 0v-8" fill="#7c7c7c" stroke="#c0c0c0" stroke-width="1.300"></path><ellipse cx="16" cy="484" rx="7.500" ry="3.500" fill="#a0a0a0" stroke="#c8c8c8" stroke-width="1.300"></ellipse></g><circle cx="11" cy="511" r="2.400" fill="#8e8e8e"></circle><circle cx="11" cy="516" r="2.400" fill="#8e8e8e"></circle><circle cx="11" cy="521" r="2.400" fill="#8e8e8e"></circle><circle cx="16" cy="511" r="2.400" fill="#8e8e8e"></circle><circle cx="16" cy="516" r="2.400" fill="#8e8e8e"></circle><circle cx="16" cy="521" r="2.400" fill="#8e8e8e"></circle><circle cx="21" cy="511" r="2.400" fill="#8e8e8e"></circle><circle cx="21" cy="516" r="2.400" fill="#8e8e8e"></circle><circle cx="21" cy="521" r="2.400" fill="#8e8e8e"></circle><path d="M8 543.500H24M8 557.500H24" stroke="#777" stroke-width="1"></path><path d="M16 544v13M9.500 550.500h13M13.500 546.500L16 544l2.500 2.500M13.500 554.500L16 557l2.500-2.500M12 548l-2.500 2.500l2.500 2.500M20 548l2.500 2.500L20 553" fill="none" stroke="#c8c8c8" stroke-width="1.200"></path><path d="M11.500 581l7-4.500l2.500 1v7.500l-7 4.500l-2.500-1Z" fill="#d8d8d8" stroke="#eee" stroke-width=".8"></path><path d="M14 582v7.500" stroke="#888" stroke-width="1"></path><path d="M11.500 587.500l2.500 1.500l7-4.500" fill="none" stroke="#5b9bff" stroke-width="1.500"></path><defs><linearGradient id="gg" x1="0" y1="0" x2="0" y2="1"><stop offset="0" stop-color="#30c8ff"></stop><stop offset="1" stop-color="#1030e0"></stop></linearGradient></defs><polygon points="24.53,611.39 24.53,613.61 21.99,614.09 21.38,615.58 22.82,617.74 21.24,619.32 19.11,617.86 17.63,618.48 17.11,621.03 14.89,621.03 14.41,618.49 12.92,617.88 10.76,619.32 9.18,617.74 10.64,615.61 10.02,614.13 7.47,613.61 7.47,611.39 10.01,610.91 10.62,609.42 9.18,607.26 10.76,605.68 12.89,607.14 14.37,606.52 14.89,603.97 17.11,603.97 17.59,606.51 19.08,607.12 21.24,605.68 22.82,607.26 21.36,609.39 21.98,610.87" fill="url(#gg)"></polygon><circle cx="16" cy="612.500" r="3.300" fill="#4a4a4a"></circle></svg>
<div class="a" style="left:1305px;top:122px;width:29px;height:516px;background:#555"></div>
<div class="a" style="left:1305px;top:122px;width:3px;height:516px;background:#4c4c4c"></div>
<div class="a" style="left:1308px;top:123px;width:26px;height:28px;background:#4e4e4e;border:1px solid #727272;border-right:none;border-radius:4px 0 0 4px"></div>
<div class="a" style="left:1308px;top:152px;width:26px;height:28px;background:#4e4e4e;border:1px solid #727272;border-right:none;border-radius:4px 0 0 4px"></div>
<div class="a" style="left:1308px;top:181px;width:26px;height:28px;background:#4e4e4e;border:1px solid #727272;border-right:none;border-radius:4px 0 0 4px"></div>
<div class="a" style="left:1308px;top:210px;width:26px;height:28px;background:#4e4e4e;border:1px solid #727272;border-right:none;border-radius:4px 0 0 4px"></div>
<div class="a" style="left:1308px;top:239px;width:26px;height:28px;background:#4e4e4e;border:1px solid #727272;border-right:none;border-radius:4px 0 0 4px"></div>
<div class="a" style="left:1306px;top:267px;width:28px;height:179px;background:#505050;border:1px solid #7a7a7a;border-right:none;border-radius:4px 0 0 2px"></div>
<div class="a" style="left:1334px;top:121px;width:30px;height:517px;background:#4a4a4a;border-top:1px solid #676767;border-left:1px solid #7a7a7a"></div>
<div class="gripH" style="left:1340px;top:127px;width:19px"></div>
<div class="corner" style="left:1360px;top:156px"></div>
<div class="corner" style="left:1360px;top:190px"></div>
<div class="corner" style="left:1360px;top:218px"></div>
<div class="corner" style="left:1360px;top:252px"></div>
<div class="corner" style="left:1360px;top:280px"></div>
<div class="corner" style="left:1360px;top:314px"></div>
<div class="corner" style="left:1360px;top:342px"></div>
<div class="corner" style="left:1360px;top:376px"></div>
<div class="corner" style="left:1360px;top:404px"></div>
<div class="corner" style="left:1360px;top:432px"></div>
<div class="corner" style="left:1360px;top:460px"></div>
<div class="corner" style="left:1360px;top:488px"></div>
<div class="corner" style="left:1360px;top:516px"></div>
<div class="corner" style="left:1360px;top:544px"></div>
<div class="corner" style="left:1360px;top:572px"></div>
<div class="corner" style="left:1360px;top:600px"></div>
<div class="corner" style="left:1360px;top:628px"></div>
<div class="a" style="left:1340px;top:162px;width:20px;height:1px;background:#2e2e2e;border-bottom:1px solid #6a6a6a;box-sizing:content-box"></div>
<div class="a" style="left:1340px;top:224px;width:20px;height:1px;background:#2e2e2e;border-bottom:1px solid #6a6a6a;box-sizing:content-box"></div>
<div class="a" style="left:1340px;top:286px;width:20px;height:1px;background:#2e2e2e;border-bottom:1px solid #6a6a6a;box-sizing:content-box"></div>
<div class="a" style="left:1340px;top:348px;width:20px;height:1px;background:#2e2e2e;border-bottom:1px solid #6a6a6a;box-sizing:content-box"></div>
<span class="t" style="left: 1319px; top: 295px; transform-origin: 0px 0px; transform: rotate(90deg) translate(0px, -8px); color: rgb(255, 255, 255); letter-spacing: -0.25px;">Advanced Rendering Styles</span>
<svg style="left:0;top:0" width="1364" height="640"><rect x="1311.500" y="129.5" width="19" height="18" fill="#5e5e5e" stroke="#f4f4f4" stroke-width="1.200"></rect><rect x="1312.500" y="130.5" width="17" height="2.500" fill="#5b8df0"></rect><rect x="1324" y="131" width="1.500" height="1.500" fill="#123"></rect><rect x="1327" y="131" width="1.500" height="1.500" fill="#123"></rect><rect x="1311.500" y="158.5" width="19" height="18" fill="#5e5e5e" stroke="#f4f4f4" stroke-width="1.200"></rect><rect x="1312.500" y="159.5" width="17" height="2.500" fill="#5b8df0"></rect><rect x="1324" y="160" width="1.500" height="1.500" fill="#123"></rect><rect x="1327" y="160" width="1.500" height="1.500" fill="#123"></rect><rect x="1311.500" y="187.5" width="19" height="18" fill="#5e5e5e" stroke="#f4f4f4" stroke-width="1.200"></rect><rect x="1312.500" y="188.5" width="17" height="2.500" fill="#5b8df0"></rect><rect x="1324" y="189" width="1.500" height="1.500" fill="#123"></rect><rect x="1327" y="189" width="1.500" height="1.500" fill="#123"></rect><rect x="1311.500" y="216.5" width="19" height="18" fill="#5e5e5e" stroke="#f4f4f4" stroke-width="1.200"></rect><rect x="1312.500" y="217.5" width="17" height="2.500" fill="#5b8df0"></rect><rect x="1324" y="218" width="1.500" height="1.500" fill="#123"></rect><rect x="1327" y="218" width="1.500" height="1.500" fill="#123"></rect><rect x="1311.500" y="245.5" width="19" height="18" fill="#5e5e5e" stroke="#f4f4f4" stroke-width="1.200"></rect><rect x="1312.500" y="246.5" width="17" height="2.500" fill="#5b8df0"></rect><rect x="1324" y="247" width="1.500" height="1.500" fill="#123"></rect><rect x="1327" y="247" width="1.500" height="1.500" fill="#123"></rect><rect x="1311.500" y="273.5" width="19" height="18" fill="#5e5e5e" stroke="#f4f4f4" stroke-width="1.200"></rect><rect x="1312.500" y="274.5" width="17" height="2.500" fill="#5b8df0"></rect><rect x="1324" y="275" width="1.500" height="1.500" fill="#123"></rect><rect x="1327" y="275" width="1.500" height="1.500" fill="#123"></rect><rect x="1314.500" y="139.500" width="9" height="6" fill="#f4f4f4" stroke="#222" stroke-width=".8"></rect><path d="M1316.500 140v5M1318.500 140v5M1320.500 140v5M1322 140v5" stroke="#222" stroke-width=".8"></path><path d="M1317 139.500l3-3.500h6v3.500h-4l-1.500 1.500" fill="#fff" stroke="#333" stroke-width=".7"></path><rect x="1326" y="134.500" width="2.500" height="4.500" fill="#0820a0"></rect><rect x="1314" y="164" width="3" height="3" fill="#fff"></rect><rect x="1325" y="164" width="3" height="3" fill="#fff"></rect><rect x="1314" y="172" width="3" height="3" fill="#fff"></rect><rect x="1325" y="172" width="3" height="3" fill="#fff"></rect><path d="M1318 167.500h6v3h-5M1320 166v6" fill="none" stroke="#88a8e8" stroke-width="1"></path><path d="M1316 196l5-2.500l5 2.500v6l-5 2.500l-5-2.500Z" fill="#d8d020"></path><path d="M1316 196l5-2.500l5 2.500l-5 2.500Z" fill="#f8f8c0"></path><path d="M1321 198.500v6.500l5-2.500v-6Z" fill="#a8a010"></path><circle cx="1318" cy="223.500" r="2.600" fill="none" stroke="#fff" stroke-width="1.800" stroke-dasharray="1.600 .9"></circle><circle cx="1318" cy="223.500" r="1.800" fill="none" stroke="#fff" stroke-width="1"></circle><circle cx="1325" cy="228.500" r="3" fill="none" stroke="#f0d000" stroke-width="2" stroke-dasharray="1.800 1"></circle><circle cx="1325" cy="228.500" r="2.200" fill="none" stroke="#f0d000" stroke-width="1.200"></circle><path d="M1318 250v11l2.600-2.300l1.800 3.800l1.700-.8l-1.800-3.700h3.500Z" fill="#fff"></path><ellipse cx="1320" cy="288" rx="6.500" ry="2.600" fill="#f0d800"></ellipse><path d="M1316 280h8v4a4 4 0 0 1-8 0Z" fill="#f8e020"></path><path d="M1320 280h4v4a4 4 0 0 1-4 4Z" fill="#e8a040"></path><ellipse cx="1320" cy="280" rx="4" ry="1.200" fill="#fff8a0"></ellipse><path d="M1324 281.500c3 0 3 4-1 4.500" fill="none" stroke="#6aa0ff" stroke-width="1"></path><path d="M1342.500 140v12.500h6c-2.500-1.500-4-3.500-4-6.500v-6Z" fill="none" stroke="#a8a8a8" stroke-width="1"></path><path d="M1357.500 140v12.500h-6c2.500-1.500 4-3.500 4-6.500v-6Z" fill="#909090" stroke="#a8a8a8" stroke-width="1"></path><path d="M1344.500 176.500l9.500 11.500M1349.500 172.500l9.500 11.500" stroke="#9a9a9a" stroke-width="2.600" fill="none"></path><path d="M1342 179.500l5-4M1347 175.500l5-4M1343 174.500l2 2.500M1348 170.500l2 2.500" stroke="#a8a8a8" stroke-width="1" fill="none"></path><path d="M1342.500 214.500l1.500-6.500l5 5Z" fill="#9a9a9a"></path><path d="M1346 210l6-6M1348.500 212.500l6-6" stroke="#a8a8a8" stroke-width="1.200"></path><path d="M1349.500 203.500l8.500 4.500l-1-8.500Z" fill="#9a9a9a"></path><path d="M1352 200.500l4.500 7" stroke="#a8a8a8" stroke-width="1"></path><rect x="1341.500" y="234.500" width="7" height="6" fill="none" stroke="#a8a8a8" stroke-width="1.300"></rect><rect x="1352.500" y="243.500" width="7" height="6" fill="none" stroke="#a8a8a8" stroke-width="1.300"></rect><path d="M1349 236c4 0 6.500 2 6.500 6M1353.500 240.500l2 2l2-2" fill="none" stroke="#a8a8a8" stroke-width="1.100"></path><rect x="1344.500" y="268.500" width="10" height="6.500" fill="none" stroke="#a8a8a8" stroke-width="1.200"></rect><path d="M1347 272h5M1348 268.500v-3h4v3M1350 265.500v-2" fill="none" stroke="#a8a8a8" stroke-width="1.100"></path><rect x="1341" y="295" width="9" height="9" fill="#8c8c8c"></rect><rect x="1344.500" y="298" width="10" height="10.500" fill="#a2a2a2"></rect><rect x="1351" y="304" width="8" height="9" fill="#949494"></rect><path d="M1345 326l2.500 2l-2.500 2Z" fill="#a8a8a8"></path><rect x="1350.500" y="331.500" width="3" height="3" fill="none" stroke="#a8a8a8" stroke-width=".9"></rect><path d="M1354 333h2" stroke="#a8a8a8" stroke-width="1"></path><rect x="1341" y="359" width="18" height="13" fill="#8a8a8a"></rect><rect x="1341" y="359" width="18" height="2" fill="#aaa"></rect><rect x="1346.500" y="364.500" width="7" height="5" fill="none" stroke="#9c9c9c" stroke-width="1"></rect><circle cx="1352" cy="391" r="6.500" fill="none" stroke="#a8a8a8" stroke-width="1.200"></circle><path d="M1342.500 393l5-4.500h6v7l-4 5h-7Z" fill="#4a4a4a" stroke="#a8a8a8" stroke-width="1.200"></path><path d="M1346 394.500l2.500-2.500h3.500v3.500" fill="none" stroke="#a8a8a8" stroke-width="1"></path><circle cx="1352" cy="420" r="6.500" fill="#8e8e8e"></circle><path d="M1342.500 422l4-3.500h7v7l-3.500 4h-7.500Z" fill="#8e8e8e" stroke="#a8a8a8" stroke-width="1"></path><rect x="1346" y="422" width="4.500" height="3.500" fill="#4a4a4a"></rect><path d="M1345 445l3.500-3.500l8 7l-4 4Z" fill="#8e8e8e" stroke="#a8a8a8" stroke-width="1"></path><circle cx="1349" cy="446" r="1" fill="#4a4a4a"></circle><path d="M1346 455h3M1347.500 453.500v3M1355 456h3M1356.500 454.500v3M1351 459h3M1352.500 457.500v3" stroke="#a8a8a8" stroke-width="1"></path><path d="M1345 475a5 4.500 0 0 1 10 0v5a5 4 0 0 1-10 0Z" fill="#a4a4a4" stroke="#a8a8a8" stroke-width="1"></path><path d="M1345.500 476h9" stroke="#4a4a4a" stroke-width="1.500"></path><path d="M1348 476v2h4v-2" fill="#4a4a4a"></path><path d="M1342 505l7-7.500h6c3 0 4 3 4 5v7l-5 4.500h-12Z" fill="#a6a6a6"></path><path d="M1349.500 498c3 .5 5 3.500 5 7" fill="none" stroke="#666" stroke-width="1"></path><path d="M1341.500 537.500h11l4-4.500v-4.500M1341.500 537.500v4h12l6-6.500v-6" fill="none" stroke="#a8a8a8" stroke-width="1.100"></path><path d="M1355 530l2.500-3l2 3.500" fill="none" stroke="#a8a8a8" stroke-width="1"></path><path d="M1342.500 563l4-2.500l4 2.500v4.500l-4 2.500l-4-2.500ZM1342.500 563l8 4.500M1350.500 563l-8 4.500M1346.500 560.500v9.500" fill="none" stroke="#a8a8a8" stroke-width="1"></path><path d="M1349.500 560v-4l3.500-2.500l3.500 2.500v5l-3.500-2Z" fill="#9a9a9a"></path><path d="M1358 563v3h-5M1354.500 564.500l-1.500 1.500l1.500 1.500" fill="none" stroke="#a8a8a8" stroke-width="1"></path><path d="M1343.500 582h13l-4.500 5v8l-2 3l-2-3v-8Z" fill="#8e8e8e" stroke="#b4b4b4" stroke-width="1"></path><path d="M1348.500 589l3 1.500M1348.500 592l3 1.500" stroke="#4a4a4a" stroke-width="1"></path><path d="M1346.500 610h6v5.500h6v6h-6v5.500h-6v-5.500h-6v-6h6Z" fill="#8e8e8e"></path></svg>
<div class="a" style="left:80px;top:22px;width:207px;height:635px;background:rgba(58,58,58,.765);border:1px solid #2a2a2a;border-top-color:#6e6e6e;box-shadow:2px 2px 3px rgba(0,0,0,.3)"></div>
<div class="a" style="left:81px;top:23px;width:27px;height:633px;background:linear-gradient(90deg,#363636,#474747 60%,#555)"></div>
<div class="a" style="left:83px;top:82px;width:24px;height:24px;background:#6682ad"></div>
<svg style="left:83px;top:82px" width="24" height="24"><path d="M8 12.500l3 3l5.500-6.500" fill="none" stroke="#111" stroke-width="2"></path></svg>
<span class="mi" style="top: 30px; color: rgb(255, 255, 255); letter-spacing: -0.59px;">Redraw</span>
<span class="sc" style="left: 254px; top: 30px; letter-spacing: -1.02px;">F5</span>
<span class="mi" style="top: 58px; color: rgb(255, 255, 255); letter-spacing: -0.74px;">Regen</span>
<span class="mi" style="top: 86px; color: rgb(255, 255, 255); letter-spacing: -0.16px;">Model Space</span>
<span class="sc" style="left: 205px; top: 86px; letter-spacing: 0.59px;">Ctrl+Alt+M</span>
<div class="msep" style="top:109px"></div>
<span class="mi" style="top: 117px; color: rgb(255, 255, 255); letter-spacing: 0.57px;">Zoom</span>
<div class="ar" style="top:121.5px"></div>
<span class="mi" style="top: 145px; color: rgb(255, 255, 255); letter-spacing: -0.98px;">Pan</span>
<div class="ar" style="top:149.5px"></div>
<span class="mi" style="top: 173px; color: rgb(255, 255, 255); letter-spacing: 0.35px;">Orbit</span>
<div class="ar" style="top:177.5px"></div>
<span class="mi" style="top: 201px; color: rgb(255, 255, 255); letter-spacing: -0.26px;">Camera</span>
<div class="ar" style="top:205.5px"></div>
<span class="mi" style="top: 229px; color: rgb(255, 255, 255); letter-spacing: 0.06px;">Walk</span>
<div class="ar" style="top:233.5px"></div>
<span class="mi" style="top: 257px; color: rgb(255, 255, 255); letter-spacing: -0.14px;">Aerial View</span>
<span class="sc" style="left: 254px; top: 257px; letter-spacing: -1.02px;">F4</span>
<div class="msep" style="top:280px"></div>
<span class="mi" style="top: 288px; color: rgb(255, 255, 255); letter-spacing: -0.01px;">Viewports</span>
<div class="ar" style="top:292.5px"></div>
<span class="mi" style="top: 316px; color: rgb(255, 255, 255); letter-spacing: -0.14px;">Named Views</span>
<div class="ar" style="top:320.5px"></div>
<span class="mi" style="top: 344px; color: rgb(255, 255, 255); letter-spacing: -0.44px;">3D Views</span>
<div class="ar" style="top:348.5px"></div>
<span class="mi" style="top: 372px; color: rgb(255, 255, 255); letter-spacing: -0.08px;">Dynamic Cut Plane</span>
<div class="ar" style="top:376.5px"></div>
<div class="msep" style="top:395px"></div>
<span class="mi" style="top: 403px; color: rgb(154, 154, 154); letter-spacing: 0.01px;">Apply Layout Template</span>
<span class="mi" style="top: 431px; color: rgb(255, 255, 255); letter-spacing: -0.1px;">Open Layout Template...</span>
<span class="mi" style="top: 459px; color: rgb(255, 255, 255); letter-spacing: -0.29px;">Save Layout as Template...</span>
<div class="msep" style="top:482px"></div>
<span class="mi" style="top: 490px; color: rgb(255, 255, 255); letter-spacing: -0.16px;">Display</span>
<div class="ar" style="top:494.5px"></div>
<span class="mi" style="top: 518px; color: rgb(255, 255, 255); letter-spacing: -0.2px;">Toolbars...</span>
<span class="mi" style="top: 546px; color: rgb(255, 255, 255); letter-spacing: -0.34px;">Visual Styles</span>
<div class="ar" style="top:550.5px"></div>
<span class="mi" style="top: 574px; color: rgb(255, 255, 255); letter-spacing: 0.08px;">Movies</span>
<div class="ar" style="top:578.5px"></div>
<div class="msep" style="top:597px"></div>
<span class="mi" style="top: 605px; color: rgb(255, 255, 255); letter-spacing: -0.08px;">Lights...</span>
<span class="mi" style="top: 633px; color: rgb(255, 255, 255); letter-spacing: 0px;">Insert Light</span>
<div class="ar" style="top:637.5px"></div>
</body></html>
